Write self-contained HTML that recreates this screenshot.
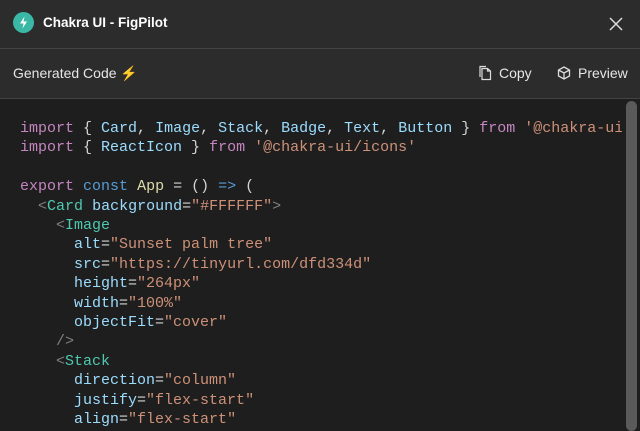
<!DOCTYPE html>
<html><head><style>
body{margin:0;width:640px;height:422px;overflow:hidden;background:#1e1e1e;font-family:"Liberation Sans",sans-serif;}
.top{position:absolute;left:0;top:0;width:640px;height:48px;background:#2c2c2c;border-bottom:1px solid #444;}
.bar{position:absolute;left:0;top:49px;width:640px;height:49px;background:#2c2c2c;border-bottom:1px solid #444;}
.logo{position:absolute;left:13px;top:12px;width:21px;height:21px;border-radius:50%;background:#3bb7a6;}
.title{position:absolute;left:43px;top:15px;color:#fff;font-weight:bold;font-size:13.5px;}
.gc{position:absolute;left:13px;top:16px;color:#e6e6e6;font-size:14px;}
.btn{position:absolute;top:16px;color:#e6e6e6;font-size:14px;}
.code{position:absolute;left:20px;top:119px;width:602px;overflow:hidden;font-family:"Liberation Mono",monospace;font-size:15px;line-height:19.4px;white-space:pre;color:#d4d4d4;}
.k{color:#c586c0}.i{color:#9cdcfe}.s{color:#ce9178}.b{color:#569cd6}.y{color:#dcdcaa}.t{color:#4ec9b0}.g{color:#808080}
.sb{position:absolute;left:626px;top:101px;width:11px;height:330px;border-radius:6px;background:#5a5a5a;}
</style></head><body>
<div class="top">
<div class="logo"><svg width="21" height="21" viewBox="0 0 21 21"><path d="M11.5 4.5 L7 11.5 H10.5 L9.5 16.5 L14 9.5 H10.5 Z" fill="#fff"/></svg></div>
<div class="title">Chakra UI - FigPilot</div>
<svg style="position:absolute;left:609px;top:17px" width="14" height="14" viewBox="0 0 14 14"><path d="M1 1L13 13M13 1L1 13" stroke="#ddd" stroke-width="1.5"/></svg>
</div>
<div class="bar">
<div class="gc">Generated Code <span style="color:#f0b030">⚡</span></div>
<svg style="position:absolute;left:478px;top:16px" width="14" height="16" viewBox="0 0 14 16"><path d="M4 3.5V14.5H12.5V6L9.5 3.5Z M9.5 3.5V6H12.5" fill="none" stroke="#ddd" stroke-width="1.2"/><path d="M2 12V1.5H8" fill="none" stroke="#ddd" stroke-width="1.2"/></svg>
<div class="btn" style="left:499px">Copy</div>
<svg style="position:absolute;left:557px;top:17px" width="14" height="14" viewBox="0 0 14 14"><path d="M7 1L12.5 4V10L7 13L1.5 10V4Z M1.5 4L7 7L12.5 4 M7 7V13" fill="none" stroke="#ddd" stroke-width="1.3"/></svg>
<div class="btn" style="left:578px">Preview</div>
</div>
<div class="code"><span class="k">import</span> { <span class="i">Card</span>, <span class="i">Image</span>, <span class="i">Stack</span>, <span class="i">Badge</span>, <span class="i">Text</span>, <span class="i">Button</span> } <span class="k">from</span> <span class="s">'@chakra-ui/react'</span>
<span class="k">import</span> { <span class="i">ReactIcon</span> } <span class="k">from</span> <span class="s">'@chakra-ui/icons'</span>

<span class="k">export</span> <span class="b">const</span> <span class="y">App</span> = () <span class="b">=&gt;</span> (
  <span class="g">&lt;</span><span class="t">Card</span> <span class="i">background</span>=<span class="s">"#FFFFFF"</span><span class="g">&gt;</span>
    <span class="g">&lt;</span><span class="t">Image</span>
      <span class="i">alt</span>=<span class="s">"Sunset palm tree"</span>
      <span class="i">src</span>=<span class="s">"https://tinyurl.com/dfd334d"</span>
      <span class="i">height</span>=<span class="s">"264px"</span>
      <span class="i">width</span>=<span class="s">"100%"</span>
      <span class="i">objectFit</span>=<span class="s">"cover"</span>
    <span class="g">/&gt;</span>
    <span class="g">&lt;</span><span class="t">Stack</span>
      <span class="i">direction</span>=<span class="s">"column"</span>
      <span class="i">justify</span>=<span class="s">"flex-start"</span>
      <span class="i">align</span>=<span class="s">"flex-start"</span></div>
<div class="sb"></div>
</body></html>
